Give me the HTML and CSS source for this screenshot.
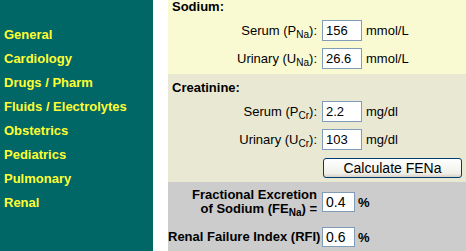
FILE: index.html
```html
<!DOCTYPE html>
<html lang="en">
<head>
  <meta charset="UTF-8" />
  <title>FENa Calculator</title>
  <link rel="stylesheet" href="styles.css">
</head>
<body>

<div class="page">
  <!-- Category menu -->
  <nav class="sidebar">
    <a href="#">General</a>
    <a href="#">Cardiology</a>
    <a href="#">Drugs / Pharm</a>
    <a href="#">Fluids / Electrolytes</a>
    <a href="#">Obstetrics</a>
    <a href="#">Pediatrics</a>
    <a href="#">Pulmonary</a>
    <a href="#">Renal</a>
  </nav>

  <div class="calc">
    <!-- Sodium -->
    <div class="calc-section sodium">
      <div class="section-title">Sodium:</div>
      <div class="calc-row">
        <label for="p-na">Serum (P<sub>Na</sub>):</label>
        <input type="text" id="p-na" value="156">
        <span class="unit">mmol/L</span>
      </div>
      <div class="calc-row">
        <label for="u-na">Urinary (U<sub>Na</sub>):</label>
        <input type="text" id="u-na" value="26.6">
        <span class="unit">mmol/L</span>
      </div>
    </div>

    <!-- Creatinine -->
    <div class="calc-section creatinine">
      <div class="section-title">Creatinine:</div>
      <div class="calc-row">
        <label for="p-cr">Serum (P<sub>Cr</sub>):</label>
        <input type="text" id="p-cr" value="2.2">
        <span class="unit">mg/dl</span>
      </div>
      <div class="calc-row">
        <label for="u-cr">Urinary (U<sub>Cr</sub>):</label>
        <input type="text" id="u-cr" value="103">
        <span class="unit">mg/dl</span>
      </div>
      <div class="button-row">
        <button type="button" onclick="calculate()">Calculate FENa</button>
      </div>
    </div>

    <!-- Results -->
    <div class="calc-section results">
      <div class="calc-row result-row tall">
        <label for="fena">Fractional Excretion<br>of Sodium (FE<sub>Na</sub>) =</label>
        <input type="text" id="fena" value="0.4">
        <span class="unit">%</span>
      </div>
      <div class="calc-row result-row">
        <label for="rfi">Renal Failure Index (RFI) =</label>
        <input type="text" id="rfi" value="0.6">
        <span class="unit">%</span>
      </div>
    </div>
  </div>
</div>

<script>
  function calculate() {
    const pNa = parseFloat(document.getElementById('p-na').value);
    const uNa = parseFloat(document.getElementById('u-na').value);
    const pCr = parseFloat(document.getElementById('p-cr').value);
    const uCr = parseFloat(document.getElementById('u-cr').value);
    if (!pNa || !pCr || !uCr) return;
    document.getElementById('fena').value = ((uNa * pCr) / (pNa * uCr) * 100).toFixed(1);
    document.getElementById('rfi').value = ((uNa * pCr) / uCr).toFixed(1);
  }
</script>

</body>
</html>
```

FILE: styles.css
```css
body {
  margin: 0;
  font-family: "Liberation Sans", Arial, sans-serif;
  font-size: 13px;
  background-color: #ffffff;
}

.page {
  display: flex;
  height: 251px;
  overflow: hidden;
}

.sidebar {
  width: 153px;
  flex-shrink: 0;
  background-color: #006666;
  padding-top: 23px;
  display: flex;
  flex-direction: column;
}

.sidebar a {
  display: block;
  height: 24px;
  line-height: 24px;
  padding-left: 4px;
  color: #ffff33;
  font-weight: bold;
  text-decoration: none;
}

.calc {
  margin-left: 15px;
  flex: 1;
  display: flex;
  flex-direction: column;
}

.calc-section {
  padding: 0 0 2px;
}

.sodium {
  background: #fafad2;
}

.creatinine {
  background: #e9e9d3;
  padding: 7px 0 0;
}

.results {
  background: #cccccc;
  flex: 1;
  padding-top: 4px;
}

.section-title {
  font-weight: bold;
  line-height: 14px;
  padding-left: 4px;
  margin-bottom: 2px;
}

.calc-row {
  display: grid;
  grid-template-columns: 149px 40px auto;
  column-gap: 5px;
  align-items: center;
  height: 28px;
}

.calc-row label {
  text-align: right;
  white-space: nowrap;
}

.calc-row sub {
  font-size: 10px;
  vertical-align: -3px;
  line-height: 0;
}

.calc-row input {
  box-sizing: border-box;
  width: 40px;
  height: 21px;
  margin: 0;
  padding: 0 3px;
  border: 1px solid #7f9db9;
  background: #ffffff;
  font-family: "Liberation Sans", Arial, sans-serif;
  font-size: 13px;
  color: #000000;
}

.unit {
  margin-left: -1px;
}

.result-row {
  grid-template-columns: 149px 33px auto;
  margin-top: 5px;
}

.result-row label {
  font-weight: bold;
  line-height: 14px;
}

.result-row input {
  width: 33px;
  height: 20px;
  font-size: 14px;
}

.result-row .unit {
  font-weight: bold;
  margin-left: -2px;
}

.result-row.tall {
  height: 32px;
  margin-top: 0;
}

.button-row {
  height: 29px;
  display: flex;
  align-items: center;
  padding-left: 155px;
}

.button-row button {
  width: 139px;
  height: 20px;
  padding: 0;
  border: 1px solid #003c74;
  border-radius: 3px;
  background: linear-gradient(#ffffff, #f0f0ea 80%, #d6d0c5);
  font-family: "Liberation Sans", Arial, sans-serif;
  font-size: 14px;
  color: #000000;
  cursor: pointer;
}
```
